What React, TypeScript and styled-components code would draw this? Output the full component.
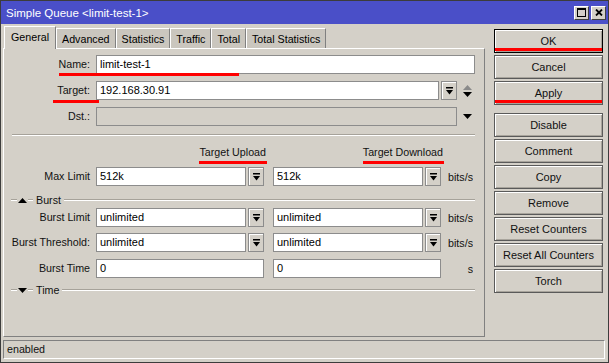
import React from 'react'
import styled, { createGlobalStyle, css } from 'styled-components'

const face = '#d4d0c8'
const shadow = '#808080'
const red = '#f00'

const GlobalStyle = createGlobalStyle`
  html, body {
    margin: 0;
    padding: 0;
    background: ${face};
  }
  body {
    font-family: 'Liberation Sans', Arial, sans-serif;
    font-size: 10.7px;
    color: #000;
  }
`

const Window = styled.div`
  width: 609px;
  height: 363px;
  box-sizing: border-box;
  border: 1px solid #3c3c3c;
  background: ${face};
  display: flex;
  flex-direction: column;
`

const TitleBar = styled.div`
  height: 23px;
  flex-shrink: 0;
  background: #4a4fc8;
  color: #fff;
  display: flex;
  align-items: center;
  padding: 0 2px 0 5px;
  font-size: 11.5px;
`

const TitleButtons = styled.div`
  margin-left: auto;
  display: flex;
  gap: 2px;
`

const TitleButton = styled.div`
  width: 15px;
  height: 14px;
  box-sizing: border-box;
  background: ${face};
  border: 1px solid;
  border-color: #fff #404040 #404040 #fff;
  display: flex;
  align-items: center;
  justify-content: center;
`

const Body = styled.div`
  flex: 1;
  display: flex;
  padding: 2px 5px 0 2px;
  gap: 9px;
`

const LeftColumn = styled.div`
  width: 482px;
  display: flex;
  flex-direction: column;
`

const TabStrip = styled.div`
  display: flex;
  align-items: flex-end;
  height: 22px;
  padding-left: 1px;
  position: relative;
  z-index: 1;
`

const Tab = styled.div<{ $active?: boolean }>`
  box-sizing: border-box;
  height: 20px;
  padding: 0 5px;
  display: flex;
  align-items: center;
  background: #cac6be;
  border-top: 1px solid #fff;
  border-left: 1px solid #fff;
  border-right: 1px solid ${shadow};
  white-space: nowrap;

  ${({ $active }) =>
    $active &&
    css`
      height: 23px;
      margin-bottom: -1px;
      padding: 0 6px 2px 6px;
      background: ${face};
    `}
`

const Panel = styled.div`
  height: 289px;
  box-sizing: border-box;
  border: 1px solid;
  border-color: #fff ${shadow} ${shadow} #fff;
  display: flex;
  flex-direction: column;
`

const Row = styled.div<{ $mt: number }>`
  display: flex;
  align-items: center;
  height: 19px;
  margin-top: ${({ $mt }) => $mt}px;
`

interface MarkProps {
  $mark?: { left: number; width: number; top: number }
}

const Label = styled.div<MarkProps>`
  width: 86px;
  margin-right: 6px;
  flex-shrink: 0;
  text-align: right;
  white-space: nowrap;
  color: #111;
  position: relative;
  height: 19px;
  line-height: 19px;

  ${({ $mark }) =>
    $mark &&
    css`
      &::after {
        content: '';
        position: absolute;
        left: ${$mark.left}px;
        top: ${$mark.top}px;
        width: ${$mark.width}px;
        height: 3px;
        background: ${red};
        z-index: 2;
      }
    `}
`

const Field = styled.div<{ $w: number; $ml?: number; $disabled?: boolean }>`
  width: ${({ $w }) => $w}px;
  margin-left: ${({ $ml }) => $ml || 0}px;
  height: 19px;
  flex-shrink: 0;
  box-sizing: border-box;
  border: 1px solid #8c8c8c;
  background: ${({ $disabled }) => ($disabled ? face : '#fff')};
  padding: 0 3px;
  line-height: 17px;
  font-size: 11px;
  white-space: nowrap;
  overflow: hidden;
`

const DropButton = styled.div`
  width: 16px;
  height: 19px;
  margin-left: 2px;
  flex-shrink: 0;
  box-sizing: border-box;
  border: 1px solid #8c8c8c;
  box-shadow: inset 1px 1px 0 #fff;
  background: ${face};
  display: flex;
  align-items: center;
  justify-content: center;
`

const SideIcon = styled.div`
  width: 10px;
  margin-left: 5px;
  display: flex;
  flex-direction: column;
  align-items: center;
  gap: 2px;
`

const Unit = styled.div`
  width: 27px;
  margin-left: 5px;
  text-align: right;
  white-space: nowrap;
  overflow: hidden;
  color: #111;
`

const Separator = styled.div<{ $mt: number }>`
  margin: ${({ $mt }) => $mt}px 0 0 8px;
  width: 463px;
  border-top: 1px solid #a6a29a;
  border-bottom: 1px solid #fff;
`

const HeaderRow = styled.div`
  display: flex;
  height: 14px;
  margin-top: 9px;
  padding-left: 92px;
  gap: 7px;
`

const HeaderCell = styled.div`
  width: 170px;
  text-align: right;
  line-height: 14px;
  color: #111;
`

const Marked = styled.span`
  position: relative;
  display: inline-block;

  &::after {
    content: '';
    position: absolute;
    left: 0;
    right: -1px;
    bottom: -5px;
    height: 3px;
    background: ${red};
  }
`

const GroupHeader = styled.div<{ $mt: number }>`
  display: flex;
  align-items: center;
  height: 14px;
  width: 464px;
  margin: ${({ $mt }) => $mt}px 0 0 7px;
  color: #111;
`

const Etch = styled.span<{ $w?: number }>`
  flex: ${({ $w }) => ($w ? `0 0 ${$w}px` : '1')};
  border-top: 1px solid #a6a29a;
  border-bottom: 1px solid #fff;
`

const GroupTitle = styled.span`
  margin: 0 3px 0 3px;
  line-height: 14px;
`

const Arrow = styled.svg`
  margin: 0 1px;
  flex-shrink: 0;
`

const RightColumn = styled.div`
  width: 109px;
  padding-top: 3px;
  display: flex;
  flex-direction: column;
  gap: 2px;
`

const Button = styled.div<{ $default?: boolean; $mark?: boolean; $mt?: number }>`
  height: 24px;
  box-sizing: border-box;
  background: ${face};
  border: 1px solid ${({ $default }) => ($default ? '#000' : '#5a5a5a')};
  box-shadow: inset 1px 1px 0 #fff, inset -1px -1px 0 #a8a49c;
  display: flex;
  align-items: center;
  justify-content: center;
  color: #111;
  font-size: 11px;
  position: relative;
  margin-top: ${({ $mt }) => $mt || 0}px;

  ${({ $mark }) =>
    $mark &&
    css`
      &::after {
        content: '';
        position: absolute;
        left: 0;
        right: 0;
        bottom: 1px;
        height: 3px;
        background: ${red};
      }
    `}
`

const StatusBar = styled.div`
  height: 19px;
  margin: 2px 3px 3px 2px;
  box-sizing: border-box;
  border: 1px solid;
  border-color: ${shadow} #fff #fff ${shadow};
  padding-left: 3px;
  line-height: 17px;
  color: #111;
`

const DropIcon = () => (
  <svg width="9" height="8" viewBox="0 0 9 8">
    <rect x="1" y="0" width="7" height="1.5" fill="#000" />
    <polygon points="1,3 8,3 4.5,7.5" fill="#000" />
  </svg>
)

const Tri = ({ up, color = '#000' }: { up?: boolean; color?: string }) => (
  <Arrow width="9" height="5" viewBox="0 0 9 5">
    <polygon points={up ? '0,5 9,5 4.5,0' : '0,0 9,0 4.5,5'} fill={color} />
  </Arrow>
)

const Group = ({ title, open, mt }: { title: string; open?: boolean; mt: number }) => (
  <GroupHeader $mt={mt}>
    <Etch $w={6} />
    <Tri up={open} />
    <Etch $w={5} />
    <GroupTitle>{title}</GroupTitle>
    <Etch />
  </GroupHeader>
)

const tabs = ['General', 'Advanced', 'Statistics', 'Traffic', 'Total', 'Total Statistics']

const buttons: { label: string; def?: boolean; mark?: boolean; mt?: number }[] = [
  { label: 'OK', def: true, mark: true },
  { label: 'Cancel' },
  { label: 'Apply', mark: true },
  { label: 'Disable', mt: 6 },
  { label: 'Comment' },
  { label: 'Copy' },
  { label: 'Remove' },
  { label: 'Reset Counters' },
  { label: 'Reset All Counters' },
  { label: 'Torch' },
]

export default function App() {
  return (
    <>
      <GlobalStyle />
      <Window>
        <TitleBar>
          Simple Queue &lt;limit-test-1&gt;
          <TitleButtons>
            <TitleButton>
              <svg width="9" height="9" viewBox="0 0 9 9">
                <rect x="0.5" y="0.5" width="8" height="8" fill="none" stroke="#000" />
                <rect x="0" y="0" width="9" height="2" fill="#000" />
              </svg>
            </TitleButton>
            <TitleButton>
              <svg width="8" height="7" viewBox="0 0 8 7">
                <path d="M1 0.5 L7 6.5 M7 0.5 L1 6.5" stroke="#000" strokeWidth="1.8" />
              </svg>
            </TitleButton>
          </TitleButtons>
        </TitleBar>

        <Body>
          <LeftColumn>
            <TabStrip>
              {tabs.map((t, i) => (
                <Tab key={t} $active={i === 0}>
                  {t}
                </Tab>
              ))}
            </TabStrip>
            <Panel>
              <Row $mt={6}>
                <Label $mark={{ left: 55, width: 180, top: 18 }}>Name:</Label>
                <Field $w={379}>limit-test-1</Field>
              </Row>
              <Row $mt={7}>
                <Label $mark={{ left: 49, width: 46, top: 19 }}>Target:</Label>
                <Field $w={343}>192.168.30.91</Field>
                <DropButton>
                  <DropIcon />
                </DropButton>
                <SideIcon>
                  <Tri up color="#8a8a8a" />
                  <Tri />
                </SideIcon>
              </Row>
              <Row $mt={7}>
                <Label>Dst.:</Label>
                <Field $w={361} $disabled />
                <SideIcon>
                  <Tri />
                </SideIcon>
              </Row>

              <Separator $mt={8} />

              <HeaderRow>
                <HeaderCell>
                  <Marked>Target Upload</Marked>
                </HeaderCell>
                <HeaderCell>
                  <Marked>Target Download</Marked>
                </HeaderCell>
              </HeaderRow>

              <Row $mt={8}>
                <Label>Max Limit</Label>
                <Field $w={150}>512k</Field>
                <DropButton>
                  <DropIcon />
                </DropButton>
                <Field $w={150} $ml={9}>
                  512k
                </Field>
                <DropButton>
                  <DropIcon />
                </DropButton>
                <Unit>bits/s</Unit>
              </Row>

              <Group title="Burst" open mt={7} />

              <Row $mt={1}>
                <Label>Burst Limit</Label>
                <Field $w={150}>unlimited</Field>
                <DropButton>
                  <DropIcon />
                </DropButton>
                <Field $w={150} $ml={9}>
                  unlimited
                </Field>
                <DropButton>
                  <DropIcon />
                </DropButton>
                <Unit>bits/s</Unit>
              </Row>
              <Row $mt={6}>
                <Label>Burst Threshold:</Label>
                <Field $w={150}>unlimited</Field>
                <DropButton>
                  <DropIcon />
                </DropButton>
                <Field $w={150} $ml={9}>
                  unlimited
                </Field>
                <DropButton>
                  <DropIcon />
                </DropButton>
                <Unit>bits/s</Unit>
              </Row>
              <Row $mt={7}>
                <Label>Burst Time</Label>
                <Field $w={168}>0</Field>
                <Field $w={168} $ml={9}>
                  0
                </Field>
                <Unit>s</Unit>
              </Row>

              <Group title="Time" mt={5} />
            </Panel>
          </LeftColumn>

          <RightColumn>
            {buttons.map((b) => (
              <Button key={b.label} $default={b.def} $mark={b.mark} $mt={b.mt}>
                {b.label}
              </Button>
            ))}
          </RightColumn>
        </Body>

        <StatusBar>enabled</StatusBar>
      </Window>
    </>
  )
}
